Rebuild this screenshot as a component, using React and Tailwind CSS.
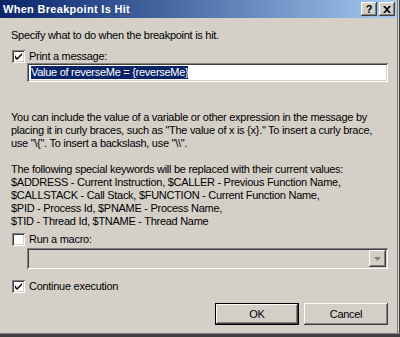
import React from "react";

const sunken =
  "shadow-[inset_1px_1px_0_#808080,inset_-1px_-1px_0_#ffffff,inset_2px_2px_0_#404040,inset_-2px_-2px_0_#d4d0c8]";
const raised =
  "shadow-[inset_-1px_-1px_0_#404040,inset_1px_1px_0_#ffffff,inset_-2px_-2px_0_#808080,inset_2px_2px_0_#d4d0c8]";

function Checkbox({ checked }) {
  return (
    <div className={`w-[13px] h-[13px] bg-white ${sunken} flex items-center justify-center shrink-0`}>
      {checked && (
        <svg width="7" height="7" viewBox="0 0 7 7">
          <path d="M0 2 L0 5 L2 7 L7 2 L7 0 L2 5 Z" fill="#000" />
        </svg>
      )}
    </div>
  );
}

function TitleButton({ children }) {
  return (
    <div className={`w-[16px] h-[14px] bg-[#d4d0c8] ${raised} flex items-center justify-center`}>
      {children}
    </div>
  );
}

const l1 = "You can include the value of a variable or other expression in the message by";
const l2 = "placing it in curly braces, such as \"The value of x is {x}.\" To insert a curly brace,";
const l3 = "use \"\\{\". To insert a backslash, use \"\\\\\".";

export default function App() {
  return (
    <div
      className="w-[400px] h-[337px] bg-[#d4d0c8] relative overflow-hidden text-[11px] leading-[13px] text-black"
      style={{ fontFamily: '"Liberation Sans", Arial, sans-serif' }}
    >
      <div className="absolute right-0 top-0 bottom-0 w-[3px] border-l border-[#808080] bg-[#d4d0c8] shadow-[inset_-1px_0_0_#404040]" />
      <div className="absolute left-0 right-0 bottom-0 h-[4px] border-t border-[#808080] bg-[#404040]" />
      <div className="h-[18px] mr-[3px] flex items-center justify-between pl-[3px] pr-[2px] bg-gradient-to-r from-[#0a246a] to-[#a6caf0]">
        <span className="text-white font-bold text-[11px] tracking-[0.3px]">When Breakpoint Is Hit</span>
        <div className="flex gap-[2px]">
          <TitleButton>
            <span className="font-bold text-[11px] leading-none text-black">?</span>
          </TitleButton>
          <TitleButton>
            <svg width="8" height="7" viewBox="0 0 8 7">
              <path d="M0 0 L2 0 L4 2 L6 0 L8 0 L5 3.5 L8 7 L6 7 L4 5 L2 7 L0 7 L3 3.5 Z" fill="#000" />
            </svg>
          </TitleButton>
        </div>
      </div>

      <div className="pl-[11px] pr-[12px] tracking-[-0.28px] whitespace-nowrap">
        <div className="mt-[11px]">Specify what to do when the breakpoint is hit.</div>

        <div className="mt-[8px] flex items-center gap-[4px] pl-[1px]">
          <Checkbox checked />
          <span>Print a message:</span>
        </div>

        <div className={`ml-[16px] h-[19px] bg-white ${sunken} flex items-center pl-[4px]`}>
          <span className="bg-[#0a246a] text-white leading-[13px]">{"Value of reverseMe = {reverseMe}"}</span>
        </div>

        <div className="mt-[29px]">
          {l1}
          <br />
          {l2}
          <br />
          {l3}
        </div>

        <div className="mt-[13px]">
          The following special keywords will be replaced with their current values:
          <br />$ADDRESS - Current Instruction, $CALLER - Previous Function Name,
          <br />$CALLSTACK - Call Stack, $FUNCTION - Current Function Name,
          <br />$PID - Process Id, $PNAME - Process Name,
          <br />$TID - Thread Id, $TNAME - Thread Name
        </div>

        <div className="mt-[5px] flex items-center gap-[4px] pl-[1px]">
          <Checkbox />
          <span>Run a macro:</span>
        </div>

        <div className={`ml-[16px] mt-[2px] h-[21px] bg-[#d4d0c8] ${sunken} flex items-center justify-end pr-[2px]`}>
          <div className={`w-[17px] h-[17px] bg-[#d4d0c8] ${raised} flex items-center justify-center`}>
            <svg width="7" height="4" viewBox="0 0 7 4">
              <path d="M0 0 L7 0 L3.5 4 Z" fill="#808080" />
            </svg>
          </div>
        </div>

        <div className="mt-[11px] flex items-center gap-[4px] pl-[1px]">
          <Checkbox checked />
          <span>Continue execution</span>
        </div>

        <div className="mt-[10px] flex justify-end gap-[5px]">
          <div className="w-[84px] h-[22px] border border-black bg-[#d4d0c8] flex items-center justify-center shadow-[inset_-1px_-1px_0_#404040,inset_1px_1px_0_#ffffff,inset_-2px_-2px_0_#808080]">
            OK
          </div>
          <div className={`w-[84px] h-[22px] bg-[#d4d0c8] ${raised} flex items-center justify-center`}>
            Cancel
          </div>
        </div>
      </div>
    </div>
  );
}
